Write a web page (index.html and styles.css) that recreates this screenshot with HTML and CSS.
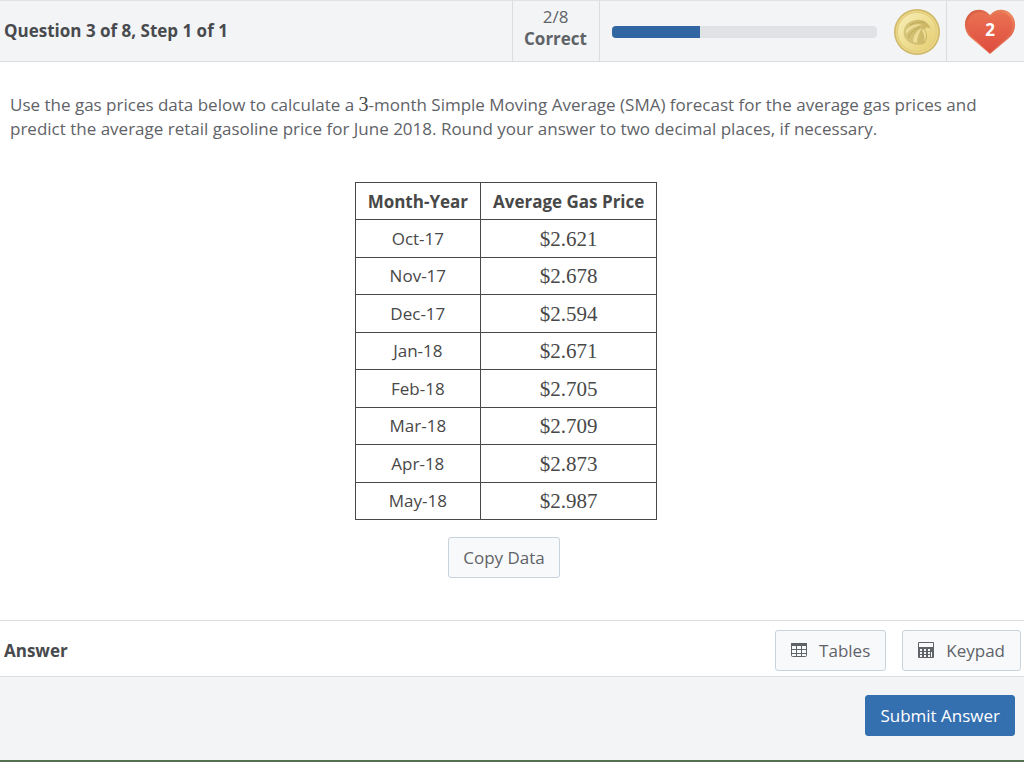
FILE: index.html
```html
<!DOCTYPE html>
<html lang="en">
<head>
    <meta charset="UTF-8">
    <meta name="viewport" content="width=device-width, initial-scale=1.0">
    <title>Simple Moving Average</title>
    <link rel="stylesheet" href="styles.css">
</head>
<body>
    <!-- Question header -->
    <header class="header">
        <h1 class="title">Question 3 of 8, Step 1 of 1</h1>
        <div class="score">
            <span>2/8</span>
            <strong>Correct</strong>
        </div>
        <div class="progress">
            <div class="track">
                <div class="fill" style="width: 33.3%"></div>
            </div>
            <svg class="coin" viewBox="0 0 46 46" aria-hidden="true">
                <defs>
                    <linearGradient id="gold" x1="0" y1="0" x2="1" y2="1">
                        <stop offset="0" stop-color="#f8efb9"/>
                        <stop offset="0.5" stop-color="#efdf93"/>
                        <stop offset="1" stop-color="#e4cb72"/>
                    </linearGradient>
                    <linearGradient id="eagle" x1="0" y1="0" x2="1" y2="0">
                        <stop offset="0" stop-color="#d6c67c"/>
                        <stop offset="1" stop-color="#cbb562"/>
                    </linearGradient>
                </defs>
                <circle cx="23" cy="23" r="23" fill="#cdb768"/>
                <circle cx="23" cy="23" r="21.5" fill="#ead585"/>
                <circle cx="23" cy="23" r="19.5" fill="url(#gold)" stroke="#e2ce7d"/>
                <path d="M11 29C7 20 13 12 22 11c7-1 12 2 15 9-3-2-5-2-6 0 3 6 3 11-1 15-8 2-15 0-19-6z" fill="url(#eagle)"/>
                <path d="M12 21c5-5 11-7 16-5-7 1-12 4-16 9zM19 33c0-6 3-11 9-14-3 5-5 9-5 15zM28 21c2 4 3 8 2 12 3-4 2-9 0-13z" fill="#eddd96"/>
                <path d="M16 16c5-3 9-3 15-2M14 29c2-5 7-9 12-11" fill="none" stroke="#bda957"/>
            </svg>
        </div>
        <div class="lives">
            <svg class="heart" viewBox="0 0 52 46" role="img" aria-label="Lives">
                <defs>
                    <linearGradient id="red" x1="0" y1="0" x2="0" y2="1">
                        <stop offset="0" stop-color="#ea7152"/>
                        <stop offset="1" stop-color="#de4c3e"/>
                    </linearGradient>
                    <linearGradient id="rim" x1="0" y1="0" x2="1" y2="1">
                        <stop offset="0" stop-color="#d4533c"/>
                        <stop offset="0.5" stop-color="#ee8a62"/>
                        <stop offset="1" stop-color="#d4453a"/>
                    </linearGradient>
                </defs>
                <path d="M26 45L7 29C-1 22-1 10 6 4c6-5 15-4 20 2 5-6 14-7 20-2 7 6 7 18-1 25z" fill="url(#rim)"/>
                <path d="M26 44L8 28C1 21 2 11 8 6c6-4 13-3 18 3 5-6 12-7 18-3 6 5 6 15-1 22z" fill="url(#red)"/>
                <text class="count" x="26" y="27" text-anchor="middle">2</text>
            </svg>
        </div>
    </header>

    <main class="question">
        <p class="prompt">Use the gas prices data below to calculate a <span class="math">3</span>-month Simple Moving Average (SMA) forecast for the average gas prices and predict the average retail gasoline price for June 2018. Round your answer to two decimal places, if necessary.</p>

        <table class="prices">
            <thead>
                <tr><th scope="col">Month-Year</th><th scope="col">Average Gas Price</th></tr>
            </thead>
            <tbody>
                <tr><td>Oct-17</td><td class="math">$2.621</td></tr>
                <tr><td>Nov-17</td><td class="math">$2.678</td></tr>
                <tr><td>Dec-17</td><td class="math">$2.594</td></tr>
                <tr><td>Jan-18</td><td class="math">$2.671</td></tr>
                <tr><td>Feb-18</td><td class="math">$2.705</td></tr>
                <tr><td>Mar-18</td><td class="math">$2.709</td></tr>
                <tr><td>Apr-18</td><td class="math">$2.873</td></tr>
                <tr><td>May-18</td><td class="math">$2.987</td></tr>
            </tbody>
        </table>
        <button class="btn" type="button">Copy Data</button>
    </main>

    <!-- Answer tools -->
    <section class="answer">
        <h2 class="title">Answer</h2>
        <button class="btn" type="button">
            <svg class="icon" viewBox="0 0 16 18" aria-hidden="true">
                <rect x="0.5" y="2.5" width="15" height="13" rx="1" fill="none" stroke="currentColor"/>
                <path d="M0 2h16v3H0z" fill="currentColor"/>
                <path d="M1 8.5h14M1 12.5h14M5.5 4v11M10.5 4v11" fill="none" stroke="currentColor"/>
            </svg>
            Tables
        </button>
        <button class="btn" type="button">
            <svg class="icon" viewBox="0 0 16 18" aria-hidden="true">
                <path d="M.5 1.5h15v15H.5z" fill="none" stroke="currentColor"/>
                <path d="M1 6h14v11H1z" fill="currentColor"/>
                <path d="M2 8h2v2H2zM6 8h2v2H6zM10 8h2v2h-2zM2 11h2v2H2zM6 11h2v2H6zM10 11h2v2h-2zM2 14h2v2H2zM6 14h2v2H6zM10 14h2v2h-2zM13 11h1v5h-1z" fill="#f8f9fb"/>
            </svg>
            Keypad
        </button>
    </section>

    <footer class="footer">
        <button class="btn submit" type="submit">Submit Answer</button>
    </footer>
</body>
</html>
```
FILE: styles.css
```css
* {
    box-sizing: border-box;
}

body {
    display: flex;
    flex-direction: column;
    min-height: 100vh;
    margin: 0;
    font-family: "Open Sans", sans-serif;
    font-size: 17px;
    line-height: 24px;
    color: #5f6368;
    background: #fff;
}

.header {
    display: flex;
    background: #f3f4f6;
    border-top: 1px solid #e0e1e3;
    border-bottom: 1px solid #dcdddf;
}

.title {
    flex: 1;
    margin: 0;
    padding-left: 4px;
    font-size: 17px;
    font-weight: 700;
    color: #484a4e;
}

.header .title {
    align-self: center;
}

.score {
    display: flex;
    flex-direction: column;
    align-items: center;
    padding: 5px 12px 11px 11px;
    line-height: 22px;
    border-left: 1px solid #dcdddf;
    border-right: 1px solid #dcdddf;
}

.progress {
    display: flex;
    align-items: center;
    gap: 17px;
    padding: 2px 6px 0 12px;
}

.track {
    width: 265px;
    height: 12px;
    overflow: hidden;
    background: #e1e2e6;
    border-radius: 4px;
}

.fill {
    height: 12px;
    background: #3166a3;
}

.coin {
    width: 46px;
    height: 46px;
}

.lives {
    display: flex;
    align-items: center;
    padding: 2px 8px 0 17px;
    border-left: 1px solid #dcdddf;
}

.heart {
    width: 52px;
    height: 46px;
}

.count {
    font-size: 17px;
    font-weight: 700;
    fill: #fff;
}

.question {
    flex: 1;
    display: flex;
    flex-direction: column;
    align-items: center;
    padding: 31px 16px 32px 0;
}

.prompt {
    width: 100%;
    margin: 0 0 41px;
    padding-left: 10px;
}

.math {
    font-family: "Liberation Serif", serif;
    font-size: 21px;
    line-height: 20px;
    color: #484848;
}

.prompt .math {
    font-size: 20px;
}

.prices {
    height: 338px;
    border-collapse: collapse;
    margin: 0 0 17px 4px;
    color: #484848;
}

.prices th,
.prices td {
    height: 37px;
    padding: 1px 12px 0;
    text-align: center;
    border: 1px solid #484848;
}

.btn {
    display: flex;
    align-items: center;
    gap: 12px;
    height: 41px;
    padding: 0 14px;
    font-family: inherit;
    font-size: 17px;
    color: #5f6368;
    background: #f8f9fb;
    border: 1px solid #c8d3db;
    border-radius: 3px;
    cursor: pointer;
}

.icon {
    width: 16px;
    height: 18px;
}

.answer {
    display: flex;
    align-items: center;
    gap: 16px;
    height: 56px;
    padding: 3px 3px 0 0;
    border-top: 1px solid #dcdddf;
}

.answer .title {
    padding-top: 2px;
}

.answer .btn {
    padding: 0 15px;
}

.footer {
    display: flex;
    justify-content: flex-end;
    padding: 18px 9px 24px;
    background: #f3f4f6;
    border-top: 1px solid #dcdddf;
    border-bottom: 2px solid #53704f;
}

.submit {
    color: #fff;
    background: #3470b0;
    border-color: #3470b0;
}
```
